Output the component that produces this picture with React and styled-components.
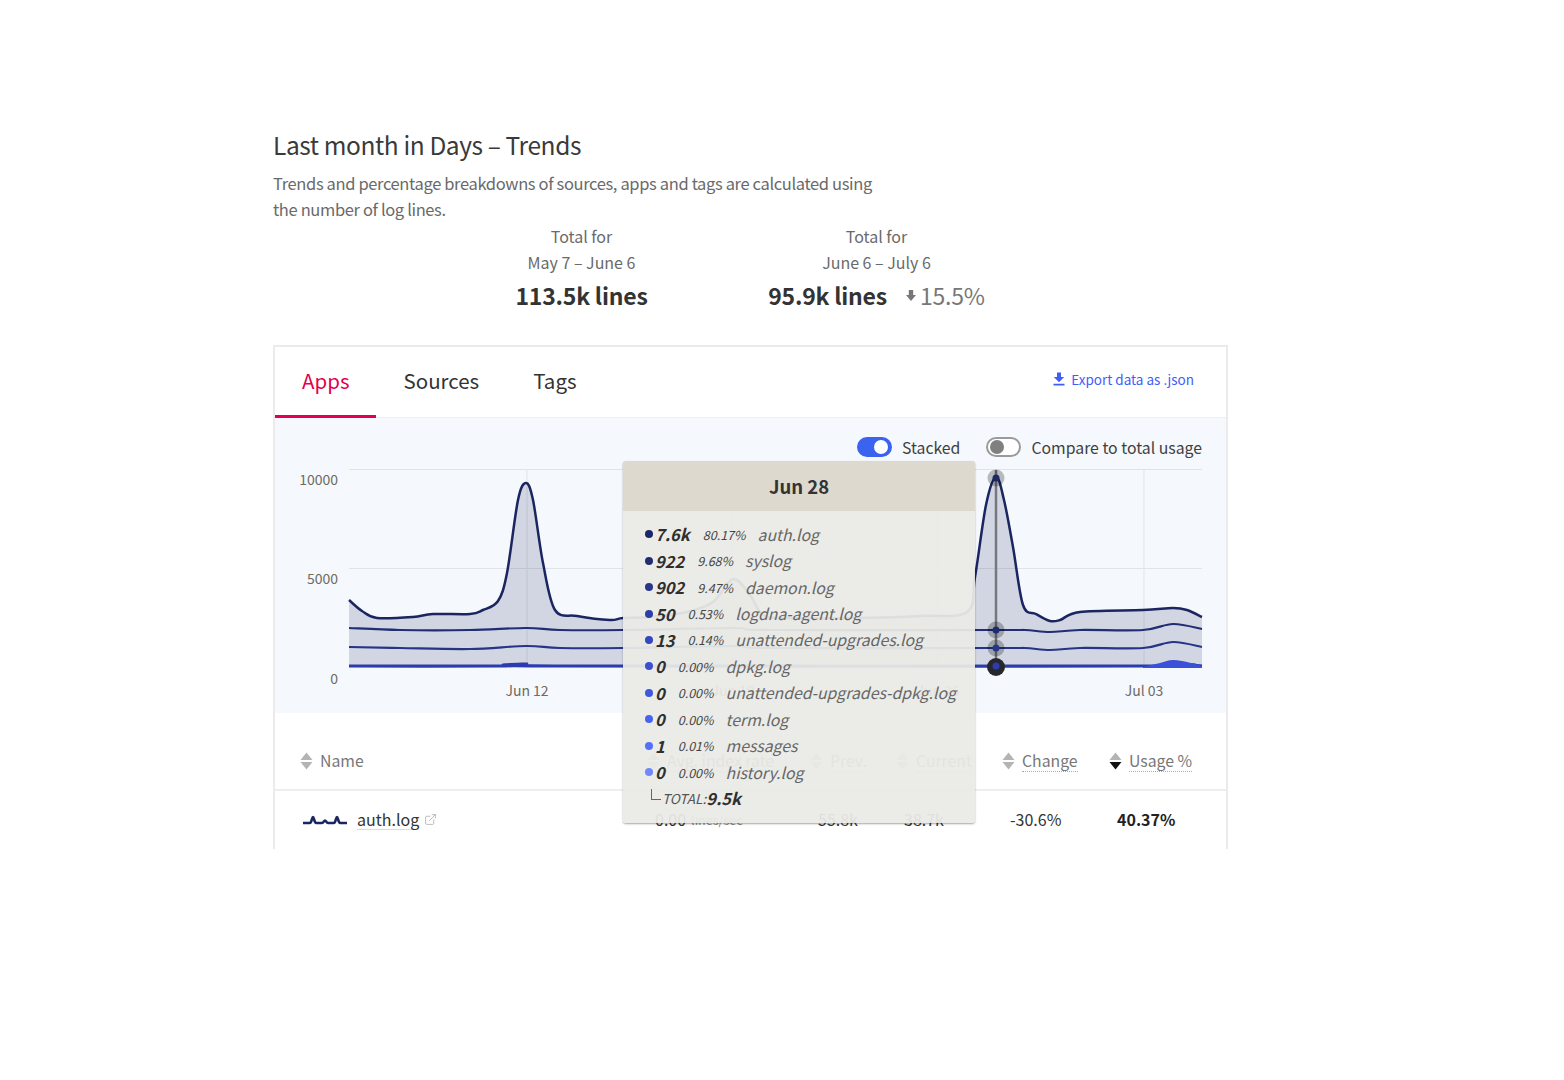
import React from "react";
import styled, { createGlobalStyle } from "styled-components";
import { ExternalLink } from "lucide-react";

const GlobalStyle = createGlobalStyle`
body {
    margin: 0;
    background: #fff;
    font-family: "Noto Sans CJK SC", "Noto Sans", sans-serif;
    color: #333;
}
`;

// chart series in page pixels, the svg viewBox uses the same numbers
const topLine = [[349,600],[362,611],[377,618],[413,617],[433,614],[470,614],[483,610],[498,601],[507,573],[518,500],[526,483],[533,500],[543,563],[555,610],[577,616],[610,620],[623,618],[650,617],[687,612],[713,602],[733,579],[750,595],[763,615],[787,618],[853,618],[920,616],[967,612],[975,577],[986,505],[996,477],[1004,500],[1013,547],[1023,605],[1036,614],[1050,621],[1060,620],[1080,612],[1143,610],[1173,608],[1187,610],[1202,617]];
const secondLine = [[349,628],[400,630],[470,630],[526,628],[560,630],[623,630],[733,628],[770,630],[996,630],[1025,630],[1050,632],[1080,630],[1143,630],[1173,624],[1202,629]];
const thirdLine = [[349,647],[400,648],[470,649],[526,646],[560,648],[623,648],[733,646],[770,648],[996,648],[1025,648],[1050,650],[1080,648],[1143,648],[1173,642],[1202,647]];
const fourthLine = [[349,666],[500,666],[526,664],[555,666],[1143,666],[1173,664],[1202,666]];
const bottomFill = [[1143,667],[1160,663],[1173,660],[1187,662],[1202,666]];

const smooth = (pts) => {
    let d = `M${pts[0][0]} ${pts[0][1]}`;
    for (let i = 0; i < pts.length - 1; i++) {
        const p0 = pts[i - 1] || pts[i];
        const p1 = pts[i];
        const p2 = pts[i + 1];
        const p3 = pts[i + 2] || p2;
        const c1x = p1[0] + (p2[0] - p0[0]) / 6;
        const c1y = p1[1] + (p2[1] - p0[1]) / 6;
        const c2x = p2[0] - (p3[0] - p1[0]) / 6;
        const c2y = p2[1] - (p3[1] - p1[1]) / 6;
        d += ` C${c1x} ${c1y} ${c2x} ${c2y} ${p2[0]} ${p2[1]}`;
    }
    return d;
};

const tooltipRows = [
    { value: "7.6k", pct: "80.17%", name: "auth.log", color: "#1c2866" },
    { value: "922", pct: "9.68%", name: "syslog", color: "#202d70" },
    { value: "902", pct: "9.47%", name: "daemon.log", color: "#27358a" },
    { value: "50", pct: "0.53%", name: "logdna-agent.log", color: "#2d3ea6" },
    { value: "13", pct: "0.14%", name: "unattended-upgrades.log", color: "#3348bc" },
    { value: "0", pct: "0.00%", name: "dpkg.log", color: "#3a50d0" },
    { value: "0", pct: "0.00%", name: "unattended-upgrades-dpkg.log", color: "#3f58e0" },
    { value: "0", pct: "0.00%", name: "term.log", color: "#4763f0" },
    { value: "1", pct: "0.01%", name: "messages", color: "#5570fa" },
    { value: "0", pct: "0.00%", name: "history.log", color: "#7088fb" },
];

const SortIcon = ({ active }) => (
    <SortSvg viewBox="0 0 13 18">
        <path d="M6.5 0.5 L12.5 8 H0.5 Z" fill="#b4b4b4" />
        <path d="M6.5 17.5 L12.5 10 H0.5 Z" fill={active ? "#111" : "#b4b4b4"} />
    </SortSvg>
);

const Chart = () => (
    <ChartSvg viewBox="275 462 951 251">
        <g stroke="#e1e3e8" strokeWidth="1">
            <line x1="349" x2="1202" y1="469.5" y2="469.5" />
            <line x1="349" x2="1202" y1="568.5" y2="568.5" />
            <line x1="527" x2="527" y1="469" y2="667" />
            <line x1="733" x2="733" y1="469" y2="667" />
            <line x1="938" x2="938" y1="469" y2="667" />
            <line x1="1144" x2="1144" y1="469" y2="667" />
        </g>
        <path d={`${smooth(topLine)} L1202 667 L349 667 Z`} fill="#1b2560" fillOpacity="0.16" />
        <path d={smooth(topLine)} fill="none" stroke="#1b2560" strokeWidth="2.5" />
        <path d={smooth(secondLine)} fill="none" stroke="#212d74" strokeWidth="2.2" />
        <path d={smooth(thirdLine)} fill="none" stroke="#273488" strokeWidth="2.2" />
        <path d={smooth(fourthLine)} fill="none" stroke="#2c3cae" strokeWidth="3.2" />
        <path d={`${smooth(bottomFill)} L1202 668 L1143 668 Z`} fill="#3a50d8" />
        <line x1="996" x2="996" y1="470" y2="667" stroke="#77787e" strokeWidth="2.5" />
        <circle cx="996" cy="478" r="8.5" fill="#000" fillOpacity="0.25" />
        <circle cx="996" cy="478" r="3.5" fill="#1c2866" />
        <circle cx="996" cy="630" r="8.5" fill="#000" fillOpacity="0.25" />
        <circle cx="996" cy="630" r="3.5" fill="#1f2b70" />
        <circle cx="996" cy="648" r="8.5" fill="#000" fillOpacity="0.25" />
        <circle cx="996" cy="648" r="3.5" fill="#27358a" />
        <circle cx="996" cy="667" r="9" fill="#26272c" />
        <circle cx="996" cy="666" r="3.5" fill="#2c3cae" />
        <g fill="#6c6c64" fontSize="14" textAnchor="end">
            <text x="338" y="485">10000</text>
            <text x="338" y="584">5000</text>
            <text x="338" y="684">0</text>
        </g>
        <g fill="#6c6c64" fontSize="14" textAnchor="middle">
            <text x="527" y="696">Jun 12</text>
            <text x="733" y="696">Jun 19</text>
            <text x="938" y="696">Jun 26</text>
            <text x="1144" y="696">Jul 03</text>
        </g>
    </ChartSvg>
);

const App = () => {
    return (
        <Page>
            <GlobalStyle />
            <Heading>Last month in Days – Trends</Heading>
            <Description>
                Trends and percentage breakdowns of sources, apps and tags are calculated using
                <br />
                the number of log lines.
            </Description>
            <Totals>
                <TotalColumn>
                    <TotalLabel>Total for</TotalLabel>
                    <TotalLabel>May 7 – June 6</TotalLabel>
                    <TotalValue>113.5k lines</TotalValue>
                </TotalColumn>
                <TotalColumn>
                    <TotalLabel>Total for</TotalLabel>
                    <TotalLabel>June 6 – July 6</TotalLabel>
                    <TotalValue>
                        95.9k lines
                        <Delta>
                            <svg width="10" height="12" viewBox="0 0 10 12">
                                <path d="M2.8 1 H7.2 V6 H10 L5 12 L0 6 H2.8 Z" fill="#777" />
                            </svg>
                            15.5%
                        </Delta>
                    </TotalValue>
                </TotalColumn>
            </Totals>
            <Card>
                <TabBar>
                    <Tabs>
                        <Tab $active>Apps</Tab>
                        <Tab>Sources</Tab>
                        <Tab>Tags</Tab>
                    </Tabs>
                    <ExportLink>
                        <svg width="12" height="14" viewBox="0 0 12 14">
                            <path d="M4 0.5 H8 V5 H11.2 L6 10.2 L0.8 5 H4 Z M0.5 11.8 H11.5 V13.5 H0.5 Z" fill="#3f5ef8" />
                        </svg>
                        Export data as .json
                    </ExportLink>
                </TabBar>
                <ChartPanel>
                    <Toggles>
                        <ToggleLabel>
                            <ToggleTrack $on>
                                <ToggleKnob $on />
                            </ToggleTrack>
                            Stacked
                        </ToggleLabel>
                        <ToggleLabel>
                            <ToggleTrack>
                                <ToggleKnob />
                            </ToggleTrack>
                            Compare to total usage
                        </ToggleLabel>
                    </Toggles>
                    <Chart />
                </ChartPanel>
                <Table>
                    <HeadCell><SortIcon /><HeadText>Name</HeadText></HeadCell>
                    <HeadCell><SortIcon /><HeadText $dotted>Avg. index rate</HeadText></HeadCell>
                    <HeadCell><SortIcon /><HeadText $dotted>Prev.</HeadText></HeadCell>
                    <HeadCell><SortIcon /><HeadText $dotted>Current</HeadText></HeadCell>
                    <HeadCell><SortIcon /><HeadText $dotted>Change</HeadText></HeadCell>
                    <HeadCell><SortIcon active /><HeadText $dotted>Usage %</HeadText></HeadCell>
                    <RowCell>
                        <svg width="44" height="12" viewBox="0 0 44 12">
                            <path d="M0 10 H7 C8.5 10 9 4 10 4 C11 4 11.5 10 13 10 H19 C20.5 10 21 7.5 22 7.5 C23 7.5 23.5 10 25 10 H31 C32.5 10 33 4 34 4 C35 4 35.5 10 37 10 H44" fill="none" stroke="#1b2560" strokeWidth="2.6" />
                        </svg>
                        <LogName>auth.log</LogName>
                        <ExternalLink size={13} strokeWidth={1.2} color="#999" />
                    </RowCell>
                    <RowCell>0.00<Unit>lines/sec</Unit></RowCell>
                    <RowCell>55.8k</RowCell>
                    <RowCell>38.7k</RowCell>
                    <RowCell>-30.6%</RowCell>
                    <RowCell $bold>40.37%</RowCell>
                </Table>
                <Tooltip>
                    <TooltipHead>Jun 28</TooltipHead>
                    <TooltipBody>
                        {tooltipRows.map((row, i) => (
                            <TooltipRow key={i}>
                                <Dot $color={row.color} />
                                <RowValue>{row.value}</RowValue>
                                <RowPct>{row.pct}</RowPct>
                                <RowName>{row.name}</RowName>
                            </TooltipRow>
                        ))}
                        <TotalRow>
                            <Corner />
                            <TotalWord>TOTAL:</TotalWord>
                            <RowValue>9.5k</RowValue>
                        </TotalRow>
                    </TooltipBody>
                </Tooltip>
            </Card>
        </Page>
    );
};

const Page = styled.div`
width: 955px;
padding: 129px 0 0 273px;
`;

const Heading = styled.h1`
margin: 0;
font-size: 24.5px;
line-height: 32px;
letter-spacing: -0.4px;
font-weight: 400;
color: #3a3a3a;
`;

const Description = styled.p`
margin: 9px 0 0 0;
font-size: 16.5px;
line-height: 26px;
letter-spacing: -0.36px;
color: #6a6a6a;
`;

const Totals = styled.div`
display: grid;
grid-template-columns: 295px 295px;
margin: 1px 0 0 161px;
`;

const TotalColumn = styled.div`
display: flex;
flex-direction: column;
align-items: center;
`;

const TotalLabel = styled.div`
font-size: 16px;
line-height: 26px;
color: #6a6a6a;
`;

const TotalValue = styled.div`
display: flex;
align-items: center;
margin-top: 7px;
font-size: 23px;
line-height: 26px;
letter-spacing: -0.2px;
font-weight: 700;
color: #333;
`;

const Delta = styled.span`
display: inline-flex;
align-items: center;
gap: 4px;
margin-left: 19px;
font-weight: 400;
color: #777;
`;

const Card = styled.div`
position: relative;
height: 502px;
margin-top: 37px;
border: 2px solid #ebebeb;
border-bottom: none;
overflow: hidden;
`;

const TabBar = styled.div`
display: flex;
justify-content: space-between;
align-items: center;
height: 70px;
padding-right: 32px;
border-bottom: 1px solid #eef0f3;
`;

const Tabs = styled.div`
display: flex;
height: calc(100% + 1px);
margin-bottom: -1px;
`;

const Tab = styled.div`
display: flex;
align-items: center;
padding: 0 27px 6px;
font-size: 20.5px;
color: ${props => (props.$active ? "#e5004f" : "#333")};
box-shadow: ${props => (props.$active ? "inset 0 -3px 0 #e5004f" : "none")};
`;

const ExportLink = styled.a`
display: flex;
align-items: center;
gap: 6px;
margin-bottom: 7px;
font-size: 13.5px;
color: #3f5ef8;
`;

const ChartPanel = styled.div`
height: 295px;
background-color: #f5f8fc;
`;

const Toggles = styled.div`
box-sizing: border-box;
display: flex;
justify-content: flex-end;
gap: 26px;
height: 44px;
padding: 19px 24px 0 0;
`;

const ToggleLabel = styled.div`
display: flex;
align-items: center;
gap: 10px;
height: 20px;
font-size: 15.8px;
color: #3f3f3f;
`;

const ToggleTrack = styled.div`
display: flex;
justify-content: ${props => (props.$on ? "flex-end" : "flex-start")};
align-items: center;
box-sizing: border-box;
width: 35px;
height: 20px;
padding: 0 2px;
border-radius: 10px;
border: 2px solid ${props => (props.$on ? "#3c62f0" : "#9a9a9a")};
background-color: ${props => (props.$on ? "#3c62f0" : "#fff")};
`;

const ToggleKnob = styled.div`
width: 14px;
height: 14px;
border-radius: 50%;
background-color: ${props => (props.$on ? "#fff" : "#808080")};
`;

const ChartSvg = styled.svg`
display: block;
width: 951px;
height: 251px;
font-family: "Noto Sans CJK SC", "Noto Sans", sans-serif;
`;

const Table = styled.div`
display: grid;
grid-template-columns: 347px 163px 86px 106px 107px 117px;
grid-template-rows: 78px 58px;
padding-left: 25px;
`;

const HeadCell = styled.div`
display: flex;
align-items: center;
gap: 7px;
box-sizing: border-box;
height: 78px;
padding-top: 19px;
border-bottom: 2px solid #eeeeee;
font-size: 15.8px;
color: #777;
&:first-child {
    margin-left: -25px;
    padding-left: 25px;
}
`;

const SortSvg = styled.svg`
width: 13px;
height: 18px;
flex-shrink: 0;
`;

const HeadText = styled.span`
border-bottom: ${props => (props.$dotted ? "1px dotted #aaa" : "none")};
line-height: 21px;
`;

const RowCell = styled.div`
display: flex;
align-items: center;
padding: 0 0 2px 8px;
font-size: 16px;
font-weight: ${props => (props.$bold ? 700 : 400)};
color: ${props => (props.$bold ? "#222" : "#333")};
svg:first-child {
    margin-left: -5px;
}
`;

const LogName = styled.span`
margin: 0 5px 0 10px;
font-size: 16px;
line-height: 20px;
border-bottom: 1px solid #ddd;
`;

const Unit = styled.span`
margin-left: 5px;
font-size: 12.5px;
color: #888;
`;

const Tooltip = styled.div`
position: absolute;
left: 348px;
top: 114px;
width: 352px;
height: 362px;
border-radius: 3px;
overflow: hidden;
background-color: rgba(234, 234, 230, 0.94);
box-shadow: 0 1px 2px rgba(0, 0, 0, 0.35);
`;

const TooltipHead = styled.div`
display: flex;
align-items: center;
justify-content: center;
height: 50px;
font-size: 18.5px;
font-weight: 700;
color: #333;
background-color: #ddd9cf;
`;

const TooltipBody = styled.div`
display: flex;
flex-direction: column;
padding: 10px 0 0 22px;
`;

const TooltipRow = styled.div`
display: flex;
align-items: center;
height: 26.45px;
white-space: nowrap;
font-style: italic;
`;

const Dot = styled.span`
width: 8px;
height: 8px;
margin-right: 2px;
border-radius: 50%;
background-color: ${props => props.$color};
`;

const RowValue = styled.span`
font-size: 16.5px;
font-weight: 700;
font-style: italic;
color: #2f2f2f;
`;

const RowPct = styled.span`
margin: 0 12px 0 13px;
font-size: 12.5px;
color: #444;
`;

const RowName = styled.span`
font-size: 15.8px;
color: #666;
`;

const TotalRow = styled.div`
display: flex;
align-items: center;
height: 26px;
font-style: italic;
`;

const Corner = styled.span`
display: block;
width: 9px;
height: 10px;
margin: -8px 1px 0 6px;
border-left: 1px solid #666;
border-bottom: 1px solid #666;
`;

const TotalWord = styled.span`
font-size: 13.5px;
color: #555;
`;

export default App;
